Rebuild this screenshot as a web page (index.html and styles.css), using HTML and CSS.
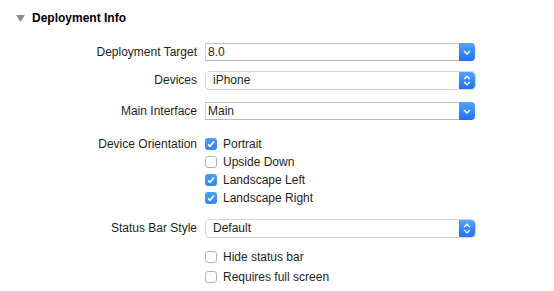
FILE: index.html
```html
<!DOCTYPE html>
<html>
<head>
<meta charset="utf-8">
<link rel="stylesheet" href="styles.css">
</head>
<body>
<div class="header">
  <svg class="disclosure" width="9" height="7" viewBox="0 0 9 7"><path d="M0 0 H9 L4.5 7 Z" fill="#8c8c8c"/></svg>
  <span class="title">Deployment Info</span>
</div>
<div class="form">
  <div class="row row-target">
    <div class="label">Deployment Target</div>
    <div class="combo">
      <div class="field">8.0</div>
      <div class="btn"><svg width="8" height="5" viewBox="0 0 8 5"><path d="M1 1 L4 4 L7 1" fill="none" stroke="#fff" stroke-width="1.4"/></svg></div>
    </div>
  </div>
  <div class="row row-devices">
    <div class="label">Devices</div>
    <div class="popup">
      <div class="field">iPhone</div>
      <div class="btn"><svg width="8" height="11" viewBox="0 0 8 11"><path d="M1.2 4 L4 1.2 L6.8 4 M1.2 7 L4 9.8 L6.8 7" fill="none" stroke="#fff" stroke-width="1.3"/></svg></div>
    </div>
  </div>
  <div class="row row-main">
    <div class="label">Main Interface</div>
    <div class="combo">
      <div class="field">Main</div>
      <div class="btn"><svg width="8" height="5" viewBox="0 0 8 5"><path d="M1 1 L4 4 L7 1" fill="none" stroke="#fff" stroke-width="1.4"/></svg></div>
    </div>
  </div>
  <div class="row row-orient">
    <div class="label label-top">Device Orientation</div>
    <div class="checks">
      <div class="check"><span class="box on"><svg width="12" height="12" viewBox="0 0 12 12"><path d="M3 6.3 L5 8.3 L9 3.6" fill="none" stroke="#fff" stroke-width="1.6"/></svg></span>Portrait</div>
      <div class="check"><span class="box"></span>Upside Down</div>
      <div class="check"><span class="box on"><svg width="12" height="12" viewBox="0 0 12 12"><path d="M3 6.3 L5 8.3 L9 3.6" fill="none" stroke="#fff" stroke-width="1.6"/></svg></span>Landscape Left</div>
      <div class="check"><span class="box on"><svg width="12" height="12" viewBox="0 0 12 12"><path d="M3 6.3 L5 8.3 L9 3.6" fill="none" stroke="#fff" stroke-width="1.6"/></svg></span>Landscape Right</div>
    </div>
  </div>
  <div class="row row-status">
    <div class="label">Status Bar Style</div>
    <div class="popup">
      <div class="field">Default</div>
      <div class="btn"><svg width="8" height="11" viewBox="0 0 8 11"><path d="M1.2 4 L4 1.2 L6.8 4 M1.2 7 L4 9.8 L6.8 7" fill="none" stroke="#fff" stroke-width="1.3"/></svg></div>
    </div>
  </div>
  <div class="row row-hide">
    <div class="label"></div>
    <div class="checks loose">
      <div class="check"><span class="box"></span>Hide status bar</div>
      <div class="check"><span class="box"></span>Requires full screen</div>
    </div>
  </div>
</div>
</body>
</html>
```

FILE: styles.css
```css
html, body {
  margin: 0;
  padding: 0;
  background: #ffffff;
}
body {
  font-family: "Liberation Sans", Arial, sans-serif;
  font-size: 12px;
  color: #1e1e1e;
  width: 554px;
  height: 291px;
  overflow: hidden;
}
.header {
  display: flex;
  align-items: center;
  height: 16px;
  margin-top: 10px;
  padding-left: 16px;
}
.disclosure {
  margin-top: 1px;
}
.title {
  margin-left: 7px;
  font-weight: bold;
  font-size: 12px;
  color: #000;
}
.form {
  display: flex;
  flex-direction: column;
  margin-top: 17px;
}
.row {
  display: flex;
  align-items: center;
}
.label {
  width: 197px;
  flex: none;
  text-align: right;
  margin-right: 8px;
  line-height: 18px;
}
.label-top {
  align-self: flex-start;
}
.row-devices { margin-top: 10px; }
.row-main { margin-top: 13px; }
.row-orient { margin-top: 15px; align-items: flex-start; }
.row-status { margin-top: 12px; }
.row-hide { margin-top: 10px; align-items: flex-start; }

.combo, .popup {
  display: flex;
  width: 270px;
  height: 18px;
  box-sizing: border-box;
}
.combo .field {
  flex: 1;
  box-sizing: border-box;
  height: 18px;
  border: 1px solid #cfcfcf;
  border-top-color: #c4c4c4;
  border-bottom-color: #b8b8b8;
  border-right: none;
  padding-left: 2px;
  line-height: 16px;
  color: #1e1e1e;
}
.popup {
  margin-left: 1px;
  width: 269px;
  border-radius: 4px;
  box-shadow: 0 0 0 1px #d4d4d4, 0 1px 0 0 #bdbdbd;
  height: 17px;
  margin-top: 1px;
  overflow: hidden;
}
.popup .field {
  flex: 1;
  padding-left: 7px;
  line-height: 17px;
  background: #fff;
}
.btn {
  width: 16px;
  flex: none;
  display: flex;
  align-items: center;
  justify-content: center;
  background: linear-gradient(#54a3fb, #1b73f2);
  border-radius: 0 4px 4px 0;
}
.checks {
  display: flex;
  flex-direction: column;
}
.check {
  display: flex;
  align-items: center;
  height: 18px;
  line-height: 18px;
}
.loose .check {
  height: 20px;
}
.box {
  width: 12px;
  height: 12px;
  box-sizing: border-box;
  border: 1px solid #b3b3b3;
  border-radius: 3px;
  background: #fff;
  margin-right: 6px;
  display: flex;
}
.box.on {
  border: none;
  background: linear-gradient(#4f9ef9, #2f84f3);
}
```
